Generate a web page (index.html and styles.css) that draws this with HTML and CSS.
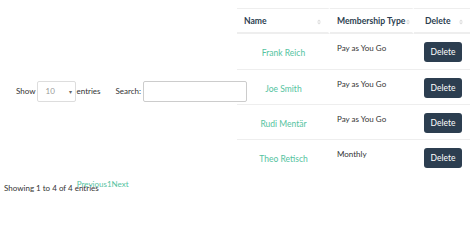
FILE: index.html
```html
<!DOCTYPE html>
<html>
<head>
<meta charset="utf-8">
<link rel="stylesheet" href="styles.css">
</head>
<body>
<div class="page">
  <div class="top">
    <div class="controls">
      <label class="length">Show
        <span class="select">10<span class="caret">▾</span></span>
        entries</label>
      <label class="search">Search:<span class="input"></span></label>
    </div>
    <table class="grid">
      <thead>
        <tr>
          <th class="c-name">Name<svg class="sort" viewBox="0 0 4 6" width="4" height="6"><path d="M0 2.4 L2 0.4 L4 2.4Z M0 3.6 L2 5.6 L4 3.6Z" fill="#dcdcdc"/></svg></th>
          <th class="c-type">Membership Type<svg class="sort" viewBox="0 0 4 6" width="4" height="6"><path d="M0 2.4 L2 0.4 L4 2.4Z M0 3.6 L2 5.6 L4 3.6Z" fill="#dcdcdc"/></svg></th>
          <th class="c-del">Delete<svg class="sort" viewBox="0 0 4 6" width="4" height="6"><path d="M0 2.4 L2 0.4 L4 2.4Z M0 3.6 L2 5.6 L4 3.6Z" fill="#dcdcdc"/></svg></th>
        </tr>
      </thead>
      <tbody>
        <tr><td class="name">Frank Reich</td><td class="type">Pay as You Go</td><td class="del"><button class="btn">Delete</button></td></tr>
        <tr><td class="name">Joe Smith</td><td class="type">Pay as You Go</td><td class="del"><button class="btn">Delete</button></td></tr>
        <tr><td class="name">Rudi Mentär</td><td class="type">Pay as You Go</td><td class="del"><button class="btn">Delete</button></td></tr>
        <tr><td class="name">Theo Retisch</td><td class="type">Monthly</td><td class="del"><button class="btn">Delete</button></td></tr>
      </tbody>
    </table>
  </div>
  <div class="footer">
    <div class="info">Showing 1 to 4 of 4 entries</div>
    <div class="paging"><span>Previous</span><span>1</span><span>Next</span></div>
  </div>
</div>
</body>
</html>
```
FILE: styles.css
```css
html, body {
  margin: 0;
  background: #fff;
}
body {
  font-family: Lato, "Noto Sans", sans-serif;
  font-size: 8px;
  color: #2c3e50;
}
.page {
  padding: 8px 4px 0 4px;
}
.top {
  display: flex;
  align-items: center;
}
.controls {
  width: 233px;
  flex: none;
  display: flex;
  align-items: center;
  padding-left: 12px;
  box-sizing: border-box;
  white-space: nowrap;
}
.length, .search {
  display: flex;
  align-items: center;
  color: #333;
}
.select {
  display: inline-flex;
  align-items: center;
  justify-content: space-between;
  box-sizing: border-box;
  width: 39px;
  height: 21px;
  margin: 0 1px 0 1px;
  padding: 0 3px 0 8px;
  border: 1px solid #ddd;
  border-radius: 2px;
  color: #999;
  font-size: 8px;
}
.caret {
  font-size: 6px;
  color: #666;
}
.search {
  margin-left: 15px;
}
.input {
  display: block;
  box-sizing: border-box;
  width: 104px;
  height: 21px;
  margin-left: 2px;
  border: 1px solid #ccc;
  border-radius: 2px;
  background: #fff;
}
.grid {
  border-collapse: separate;
  border-spacing: 0;
  width: 233px;
  flex: none;
}
.grid thead tr { height: 26px; }
.grid th {
  padding: 1px 0 0 7px;
  text-align: left;
  font-weight: 700;
  font-size: 8.6px;
  color: #2c3e50;
  border-top: 1px solid #eee;
  border-bottom: 2px solid #eee;
  border-right: 2px solid #fff;
  vertical-align: middle;
  position: relative;
}
.grid th:last-child { border-right: 0; }
.sort {
  position: absolute;
  right: 7px;
  top: 10px;
}
.c-type .sort { right: 2px; }
.c-name { width: 84px; }
.c-type { width: 75px; }
.grid th.c-del { padding-left: 11px; }
.grid tbody tr { height: 35px; }
.grid td {
  padding: 0;
  border-top: 1px solid #eee;
}
.grid tbody tr:first-child td { border-top: 0; }
.grid td.name {
  text-align: center;
  vertical-align: middle;
  padding-top: 3px;
  font-size: 8.5px;
  color: #54c3a0;
}
.grid td.type {
  vertical-align: top;
  padding: 9px 0 0 7px;
  color: #333;
}
.grid td.del {
  vertical-align: middle;
  padding: 1px 0 0 10px;
}
.btn {
  display: block;
  width: 38px;
  height: 20px;
  padding: 0;
  border: 0;
  border-radius: 3px;
  background: #2c3e50;
  color: #fff;
  font-family: Lato, "Noto Sans", sans-serif;
  font-size: 8.5px;
}
.footer {
  display: flex;
  align-items: flex-start;
  margin-top: 6px;
}
.info {
  padding-top: 3px;
  color: #333;
}
.paging {
  display: flex;
  margin-left: -22px;
  margin-top: -1px;
  color: #54c3a0;
}
```
